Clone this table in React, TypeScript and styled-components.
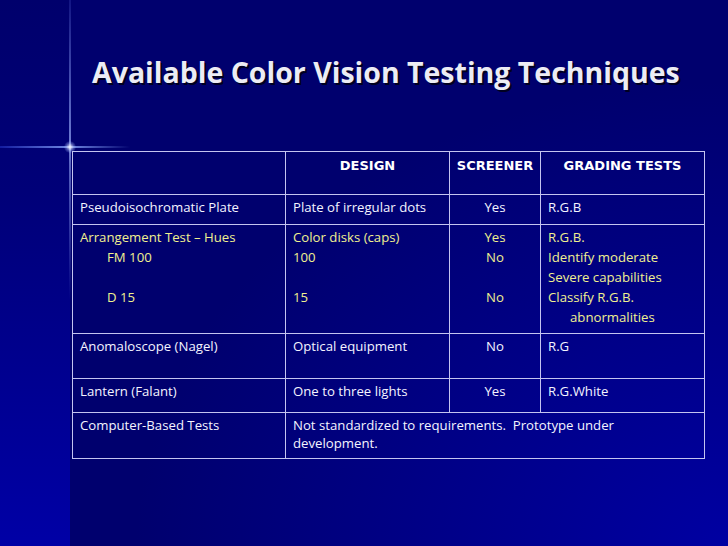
import styled, { createGlobalStyle } from "styled-components";

const GlobalStyle = createGlobalStyle`
  html, body {
    margin: 0;
    padding: 0;
    background: #000070;
  }
`;

const Slide = styled.div`
  position: relative;
  display: flex;
  width: 728px;
  height: 546px;
  overflow: hidden;
  font-family: "Open Sans", "DejaVu Sans", sans-serif;
`;

const Strip = styled.div`
  width: 70px;
  flex: none;
  background: linear-gradient(180deg, #00006c 0%, #000078 35%, #0000a6 100%);
`;

const Main = styled.div`
  flex: 1;
  display: flex;
  flex-direction: column;
  padding-top: 55px;
  background: radial-gradient(ellipse 90% 85% at 100% 100%, #0000a2 0%, #00008a 45%, #00006e 100%);
`;

const Title = styled.h1`
  margin: 0 0 62px 22px;
  height: 34px;
  font-family: "Open Sans", "DejaVu Sans", sans-serif;
  font-weight: 700;
  font-size: 28.5px;
  line-height: 34px;
  color: #ececf4;
  text-shadow: 2px 2px 0 #000020;
  white-space: nowrap;
`;

const VLine = styled.div`
  position: absolute;
  left: 69px;
  top: 0;
  width: 2px;
  height: 300px;
  background: linear-gradient(180deg, rgba(120, 140, 255, 0.15) 0%, rgba(160, 180, 255, 0.7) 49%, rgba(160, 180, 255, 0.55) 55%, rgba(120, 140, 255, 0) 100%);
`;

const HLine = styled.div`
  position: absolute;
  left: 0;
  top: 146px;
  width: 130px;
  height: 2px;
  background: linear-gradient(90deg, rgba(60, 90, 255, 0.3) 0%, rgba(140, 170, 255, 0.8) 54%, rgba(100, 130, 255, 0) 100%);
`;

const Glow = styled.div`
  position: absolute;
  left: 64px;
  top: 141px;
  width: 12px;
  height: 12px;
  border-radius: 50%;
  background: radial-gradient(circle, rgba(255, 255, 255, 0.95) 0%, rgba(170, 190, 255, 0.4) 45%, rgba(100, 120, 255, 0) 75%);
`;

const Table = styled.table`
  margin-left: 2px;
  width: 632px;
  border-collapse: collapse;
  table-layout: fixed;
  font-size: 13.2px;
`;

const Row = styled.tr<{ $h: number }>`
  height: ${(p) => p.$h}px;
`;

const Head = styled.th`
  border: 1.5px solid #c4c4f0;
  padding: 4px 6px 0;
  vertical-align: top;
  text-align: center;
  color: #ffffff;
  font-family: "DejaVu Sans", Verdana, sans-serif;
  font-weight: bold;
  font-size: 13px;
  line-height: 20px;
  white-space: nowrap;
`;

const Cell = styled.td<{ $hi?: boolean; $center?: boolean }>`
  border: 1.5px solid #c4c4f0;
  padding: 2px 7px 0;
  vertical-align: top;
  text-align: ${(p) => (p.$center ? "center" : "left")};
  color: ${(p) => (p.$hi ? "#f0f090" : "#f4f4ff")};
  line-height: 20px;
`;

const Line = styled.div<{ $indent?: number }>`
  padding-left: ${(p) => p.$indent ?? 0}px;
  min-height: 20px;
  white-space: nowrap;
`;

const Wrap = styled.div`
  line-height: 18px;
  padding-top: 1px;
`;

export default function App() {
  return (
    <>
      <GlobalStyle />
      <Slide>
        <Strip />
        <Main>
          <Title>Available Color Vision Testing Techniques</Title>
          <Table>
            <colgroup>
              <col style={{ width: 213 }} />
              <col style={{ width: 164 }} />
              <col style={{ width: 91 }} />
              <col style={{ width: 164 }} />
            </colgroup>
            <tbody>
              <Row $h={43}>
                <Head />
                <Head>DESIGN</Head>
                <Head>SCREENER</Head>
                <Head>GRADING TESTS</Head>
              </Row>
              <Row $h={30}>
                <Cell>Pseudoisochromatic Plate</Cell>
                <Cell>Plate of irregular dots</Cell>
                <Cell $center>Yes</Cell>
                <Cell>R.G.B</Cell>
              </Row>
              <Row $h={109}>
                <Cell $hi>
                  <Line>Arrangement Test – Hues</Line>
                  <Line $indent={27}>FM 100</Line>
                  <Line />
                  <Line $indent={27}>D 15</Line>
                </Cell>
                <Cell $hi>
                  <Line>Color disks (caps)</Line>
                  <Line>100</Line>
                  <Line />
                  <Line>15</Line>
                </Cell>
                <Cell $hi $center>
                  <Line>Yes</Line>
                  <Line>No</Line>
                  <Line />
                  <Line>No</Line>
                </Cell>
                <Cell $hi>
                  <Line>R.G.B.</Line>
                  <Line>Identify moderate</Line>
                  <Line>Severe capabilities</Line>
                  <Line>Classify R.G.B.</Line>
                  <Line $indent={22}>abnormalities</Line>
                </Cell>
              </Row>
              <Row $h={45}>
                <Cell>Anomaloscope (Nagel)</Cell>
                <Cell>Optical equipment</Cell>
                <Cell $center>No</Cell>
                <Cell>R.G</Cell>
              </Row>
              <Row $h={34}>
                <Cell>Lantern (Falant)</Cell>
                <Cell>One to three lights</Cell>
                <Cell $center>Yes</Cell>
                <Cell>R.G.White</Cell>
              </Row>
              <Row $h={46}>
                <Cell>Computer-Based Tests</Cell>
                <Cell colSpan={3}>
                  <Wrap>
                    Not standardized to requirements.&nbsp; Prototype under
                    <br />
                    development.
                  </Wrap>
                </Cell>
              </Row>
            </tbody>
          </Table>
        </Main>
        <VLine />
        <HLine />
        <Glow />
      </Slide>
    </>
  );
}
